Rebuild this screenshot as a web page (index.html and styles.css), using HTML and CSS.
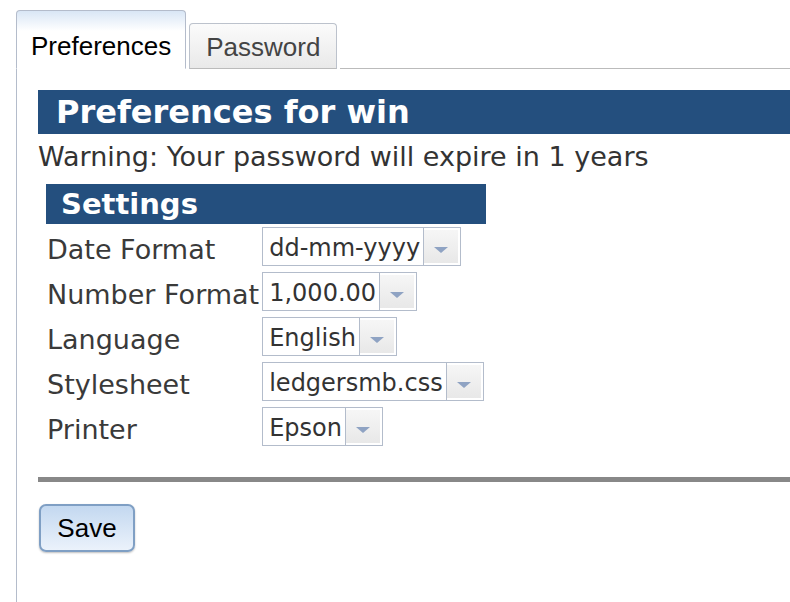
FILE: index.html
```html
<!DOCTYPE html>
<html>
	<head>
		<meta charset="UTF-8">
		<title>Preferences</title>
		<link rel="stylesheet" href="styles.css">
	</head>

	<body>
		<div class="tabcontainer">
			<div class="tablist">
				<div class="tab active">Preferences</div>
				<div class="tab">Password</div>
				<div class="tabfill"></div>
			</div>

			<div class="pane">
				<h1 class="listtop">Preferences for win</h1>
				<p class="warning">Warning: Your password will expire in 1 years</p>

				<table class="settings">
					<tr>
						<th colspan="2" class="listheading">Settings</th>
					</tr>
					<tr>
						<td class="label">Date Format</td>
						<td><span class="select"><span class="value">dd-mm-yyyy</span><span class="arrow"></span></span></td>
					</tr>
					<tr>
						<td class="label">Number Format</td>
						<td><span class="select"><span class="value">1,000.00</span><span class="arrow"></span></span></td>
					</tr>
					<tr>
						<td class="label">Language</td>
						<td><span class="select"><span class="value">English</span><span class="arrow"></span></span></td>
					</tr>
					<tr>
						<td class="label">Stylesheet</td>
						<td><span class="select"><span class="value">ledgersmb.css</span><span class="arrow"></span></span></td>
					</tr>
					<tr>
						<td class="label">Printer</td>
						<td><span class="select"><span class="value">Epson</span><span class="arrow"></span></span></td>
					</tr>
				</table>

				<hr>

				<button type="submit" class="save">Save</button>
			</div>
		</div>
	</body>
</html>
```

FILE: styles.css
```css
body {
    margin: 0; padding: 0;
    background: #ffffff;
    font-family: "DejaVu Sans", Verdana, sans-serif;
    color: #3a3a3a;
    overflow: hidden;
}

.tabcontainer {
    margin: 10px 0 0 16px;
}

.tablist {
    display: flex;
    align-items: flex-end;
}

.tab {
    font-family: "Liberation Sans", Arial, sans-serif;
    font-size: 26px;
    line-height: 30px;
    border: 1px solid #bcc2cc;
    border-bottom: 1px solid #bbbbbb;
    border-radius: 4px 4px 0 0;
    padding: 8px 16px 6px 16px;
    margin-right: 3px;
    color: #444444;
    background: linear-gradient(#fbfbfb, #e9e9e9);
}

.tab.active {
    padding: 20px 14px 7px 14px;
    border-color: #b4bccb;
    border-bottom-color: #ffffff;
    color: #000000;
    background: linear-gradient(#d9e6f5, #ffffff 35%);
}

.tabfill {
    flex: 1;
    border-bottom: 1px solid #bbbbbb;
}

.pane {
    border-left: 1px solid #b4bccb;
    padding: 21px 0 60px 21px;
}

h1.listtop {
    margin: 0;
    background-color: #244f7e;
    color: #ffffff;
    font-size: 32px;
    line-height: 44px;
    padding-left: 18px;
}

p.warning {
    margin: 5px 0 9px 0;
    font-size: 27px;
    line-height: 36px;
    color: #333333;
}

table.settings {
    margin-left: 8px;
    border-collapse: collapse;
}

th.listheading {
    background-color: #244f7e;
    color: #ffffff;
    font-size: 29px;
    line-height: 40px;
    text-align: left;
    padding: 0 0 0 15px;
}

td {
    padding: 3px 2px 3px 1px;
    white-space: nowrap;
}

td.label {
    font-size: 27px;
    padding: 6px 2px 0 1px;
}

.select {
    display: inline-flex;
    vertical-align: middle;
    height: 37px;
    border: 1px solid #b3bccb;
    font-size: 24px;
    color: #333333;
    background: #ffffff;
}

.select .value {
    line-height: 33px;
    padding: 4px 3px 0 6px;
}

.select .arrow {
    width: 34px;
    border: 2px solid #ffffff;
    border-left: none;
    box-shadow: -1px 0 0 #b3bccb;
    margin-left: 1px;
    background: linear-gradient(#f6f6f6, #e8e8e8);
    position: relative;
}

.select .arrow::after {
    content: "";
    position: absolute;
    left: 10px; top: 17px;
    border-left: 7px solid transparent;
    border-right: 7px solid transparent;
    border-top: 6px solid #8fa3c3;
}

hr {
    margin: 28px 0 0 0;
    height: 5px;
    border: none;
    background: #888888;
}

button.save {
    margin: 22px 0 0 1px;
    width: 96px;
    height: 48px;
    font-family: "Liberation Sans", Arial, sans-serif;
    font-size: 26px;
    color: #000000;
    border: 2px solid #7f9fc4;
    border-radius: 7px;
    background: linear-gradient(#c3d8f0, #ebf2fb);
    box-shadow: 0 1px 2px rgba(0, 0, 0, .25);
}
```
